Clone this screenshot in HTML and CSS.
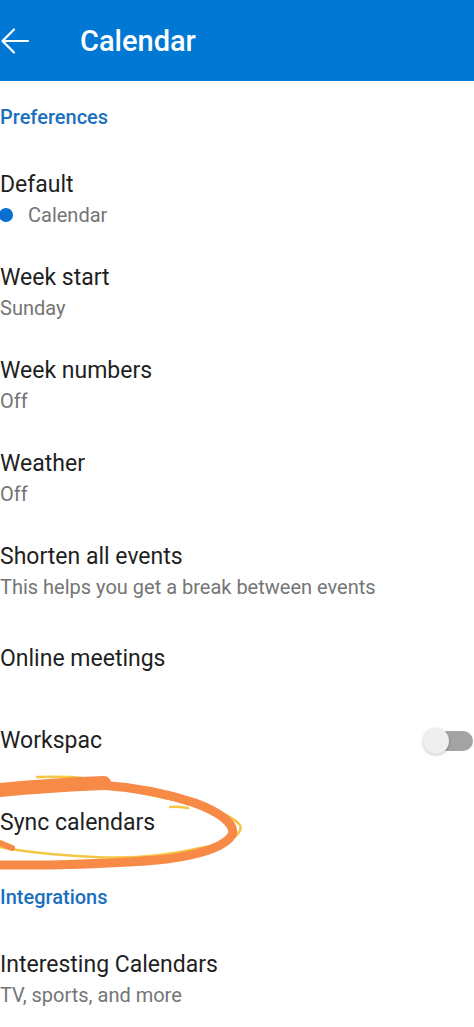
FILE: index.html
```html
<!DOCTYPE html>
<html>
<head>
  <title>Calendar settings</title>
  <link rel="stylesheet" href="styles.css">
</head>
<body>
  <header class="topbar">
    <svg class="back" width="30" height="30" viewBox="0 0 30 30">
      <path d="M28 15H3M14 3.5L2.5 15L14 26.5" fill="none" stroke="#fff" stroke-width="2.2" stroke-linecap="round" stroke-linejoin="round"/>
    </svg>
    <h1>Calendar</h1>
  </header>

  <main class="settings">
    <h2 class="section">Preferences</h2>

    <div class="item">
      <div class="title">Default</div>
      <div class="sub"><span class="dot"></span>Calendar</div>
    </div>

    <div class="item">
      <div class="title">Week start</div>
      <div class="sub">Sunday</div>
    </div>

    <div class="item">
      <div class="title">Week numbers</div>
      <div class="sub">Off</div>
    </div>

    <div class="item">
      <div class="title">Weather</div>
      <div class="sub">Off</div>
    </div>

    <div class="item">
      <div class="title">Shorten all events</div>
      <div class="sub">This helps you get a break between events</div>
    </div>

    <div class="item single">
      <div class="title">Online meetings</div>
    </div>

    <div class="item single row">
      <div class="title">Workspac</div>
      <span class="toggle"><span class="thumb"></span></span>
    </div>

    <div class="item single">
      <div class="title">Sync calendars</div>
    </div>

    <h2 class="section second">Integrations</h2>

    <div class="item">
      <div class="title">Interesting Calendars</div>
      <div class="sub">TV, sports, and more</div>
    </div>

    <!-- hand drawn marker circle around "Sync calendars" -->
    <svg class="scribble" width="260" height="110" viewBox="0 0 260 110">
      <path d="M37 2 C 70 1, 95 2, 110 10 C 130 16, 150 20, 175 25 C 205 31, 232 40, 240 50 C 244 60, 225 70, 200 73 C 170 80, 133 84, 95 82 C 55 80, 25 77, 0 72" fill="none" stroke="#f6c744" stroke-width="2.5" stroke-linecap="round"/>
      <path d="M170 32 C 176 31, 182 32, 188 33" fill="none" stroke="#f6c744" stroke-width="2.5" stroke-linecap="round"/>
      <path d="M0 68 L 12 73" fill="none" stroke="#f88a48" stroke-width="6" stroke-linecap="round"/>
      <path d="M0 15 C 40 11, 80 9, 104 8" fill="none" stroke="#f88a48" stroke-width="14" stroke-linecap="round"/>
      <path d="M100 10 C 130 12, 165 18, 195 28 C 222 38, 236 50, 232 60 C 226 70, 205 79, 167 84 C 130 88, 90 89, 50 90 C 30 90, 12 90, 0 90" fill="none" stroke="#f88a48" stroke-width="9" stroke-linecap="round"/>
    </svg>
  </main>
</body>
</html>
```

FILE: styles.css
```css
body {
  margin: 0;
  font-family: Roboto, "Noto Sans", Arial, sans-serif;
  color: #212121;
  background: #fff;
  width: 474px;
  overflow: hidden;
}

.topbar {
  height: 81px;
  background-color: #0078d4;
  display: flex;
  align-items: center;
}

.topbar h1 {
  margin: 0 0 0 50px;
  color: #fff;
  font-size: 29px;
  font-weight: 500;
}

.settings {
  position: relative;
}

.section {
  margin: 0;
  padding: 22px 0;
  line-height: 28px;
  font-size: 20px;
  font-weight: 500;
  color: #1a6fbf;
}

.section.second {
  padding: 19px 0 22px;
}

.item {
  padding: 16.5px 0;
}

.item.single {
  padding: 26px 0;
}

.item.row {
  display: flex;
  justify-content: space-between;
  align-items: center;
}

.title {
  font-size: 23px;
  line-height: 30px;
  color: #1f1f1f;
}

.sub {
  font-size: 20px;
  line-height: 30px;
  color: #757575;
  display: flex;
  align-items: center;
}

.dot {
  width: 14px;
  height: 14px;
  border-radius: 50%;
  background-color: #0a6fd0;
  margin-left: -1px;
  margin-right: 15px;
}

.toggle {
  position: relative;
  width: 36px;
  height: 20px;
  margin-right: 1px;
  border-radius: 10px;
  background-color: #a3a3a3;
}

.thumb {
  position: absolute;
  left: -14px;
  top: -3px;
  width: 26px;
  height: 26px;
  border-radius: 50%;
  background-color: #efefef;
  box-shadow: 0 1px 3px rgba(0, 0, 0, 0.25);
}

.scribble {
  position: absolute;
  left: 0;
  top: 694px;
}
```
